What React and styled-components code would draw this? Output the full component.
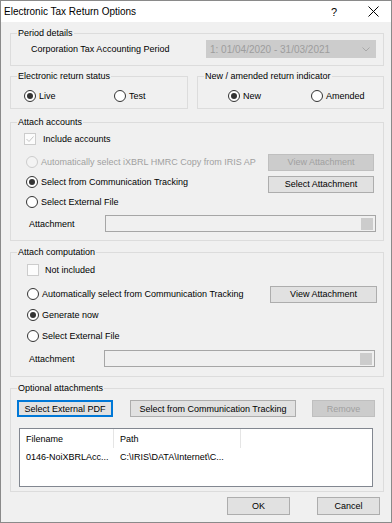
import React from 'react'
import styled, { createGlobalStyle } from 'styled-components'

const GlobalStyle = createGlobalStyle`
  body {
    margin: 0;
    background: #ffffff;
    font-family: "Liberation Sans", Arial, sans-serif;
  }
`

function Radio({ checked, disabled, gap = 3, children }) {
  return (
    <RadioLabel $disabled={disabled} $gap={gap}>
      <RadioCircle $checked={checked} $disabled={disabled} />
      <span>{children}</span>
    </RadioLabel>
  )
}

function Check({ checked, gap, children }) {
  return (
    <RadioLabel $gap={gap}>
      <CheckBox>
        {checked && (
          <svg width="10" height="10" viewBox="0 0 10 10">
            <polyline points="1.5,5 4,7.5 8.5,2.5" fill="none" stroke="#c4c4c4" strokeWidth="1" />
          </svg>
        )}
      </CheckBox>
      <span>{children}</span>
    </RadioLabel>
  )
}

function AttachmentField() {
  return (
    <Field>
      <FieldButton />
    </Field>
  )
}

function App() {
  return (
    <>
      <GlobalStyle />
      <Window>
        <TitleBar>
          <Title>Electronic Tax Return Options</Title>
          <HelpButton>?</HelpButton>
          <CloseButton>
            <svg width="11" height="11" viewBox="0 0 11 11">
              <path d="M0.5 0.5 L10.5 10.5 M10.5 0.5 L0.5 10.5" stroke="#000" strokeWidth="1" />
            </svg>
          </CloseButton>
        </TitleBar>

        <Body>
          <Group $h={38}>
            <Legend>Period details</Legend>
            <PeriodRow>
              <span>Corporation Tax Accounting Period</span>
              <Combo>
                <span>1: 01/04/2020 - 31/03/2021</span>
                <svg width="8" height="5" viewBox="0 0 8 5">
                  <polyline points="0.5,0.5 4,4 7.5,0.5" fill="none" stroke="#a8a8a8" strokeWidth="1" />
                </svg>
              </Combo>
            </PeriodRow>
          </Group>

          <StatusRow>
            <Group $h={38} $w={178}>
              <Legend>Electronic return status</Legend>
              <RadioLine $pl={13} $cols="90px auto">
                <Radio checked>Live</Radio>
                <Radio>Test</Radio>
              </RadioLine>
            </Group>
            <Group $h={38} $grow>
              <Legend>New / amended return indicator</Legend>
              <RadioLine $pl={30} $cols="83px auto">
                <Radio checked>New</Radio>
                <Radio>Amended</Radio>
              </RadioLine>
            </Group>
          </StatusRow>

          <Group $h={124} $mt={8}>
            <Legend>Attach accounts</Legend>
            <GroupBody $pl={13}>
              <OptionRow $mt={1}>
                <Check checked gap={7}>Include accounts</Check>
              </OptionRow>
              <OptionRow $mt={3} $indent={2}>
                <Radio disabled>Automatically select iXBRL HMRC Copy from IRIS AP</Radio>
                <Button disabled $w={106} $mr={2}>View Attachment</Button>
              </OptionRow>
              <OptionRow $indent={2}>
                <Radio checked>Select from Communication Tracking</Radio>
                <Button $w={106} $mr={2} $mt={4}>Select Attachment</Button>
              </OptionRow>
              <OptionRow $indent={2}>
                <Radio>Select External File</Radio>
              </OptionRow>
              <AttachRow $mt={3} $indent={5}>
                <span>Attachment</span>
                <AttachmentField />
              </AttachRow>
            </GroupBody>
          </Group>

          <Group $h={130} $mt={6}>
            <Legend>Attach computation</Legend>
            <GroupBody $pl={16}>
              <OptionRow $mt={2}>
                <Check gap={6}>Not included</Check>
              </OptionRow>
              <OptionRow $mt={4}>
                <Radio gap={3}>Automatically select from Communication Tracking</Radio>
                <Button $w={107} $mr={-1}>View Attachment</Button>
              </OptionRow>
              <OptionRow $mt={1}>
                <Radio checked>Generate now</Radio>
              </OptionRow>
              <OptionRow $mt={1}>
                <Radio>Select External File</Radio>
              </OptionRow>
              <AttachRow $mt={4} $indent={2} $mr={1}>
                <span>Attachment</span>
                <AttachmentField />
              </AttachRow>
            </GroupBody>
          </Group>

          <Group $h={109} $mt={6}>
            <Legend>Optional attachments</Legend>
            <GroupBody $pl={6}>
              <ButtonRow>
                <Button $w={96} $focus>Select External PDF</Button>
                <Button $w={166}>Select from Communication Tracking</Button>
                <Button $w={63} disabled>Remove</Button>
              </ButtonRow>
              <ListBox>
                <ListGrid>
                  <HeaderCell>Filename</HeaderCell>
                  <HeaderCell>Path</HeaderCell>
                  <HeaderCell $last />
                  <Cell>0146-NoiXBRLAcc...</Cell>
                  <Cell>C:\IRIS\DATA\Internet\C...</Cell>
                  <Cell />
                </ListGrid>
              </ListBox>
            </GroupBody>
          </Group>

          <Footer>
            <Button $w={63} $h={18}>OK</Button>
            <Button $w={63} $h={18}>Cancel</Button>
          </Footer>
        </Body>
      </Window>
    </>
  )
}

export default App

const Window = styled.div`
  width: 392px;
  height: 523px;
  box-sizing: border-box;
  border: 1px solid #8a8a8a;
  background: #f0f0f0;
  display: flex;
  flex-direction: column;
  font-size: 9px;
  color: #000;
`

const TitleBar = styled.div`
  height: 21px;
  background: #ffffff;
  display: flex;
  align-items: center;
  padding-left: 3px;
`

const Title = styled.div`
  font-size: 10px;
`

const HelpButton = styled.div`
  margin-left: auto;
  font-size: 11px;
`

const CloseButton = styled.div`
  display: flex;
  margin-left: 31px;
  margin-right: 12px;
`

const Body = styled.div`
  flex: 1;
  display: flex;
  flex-direction: column;
  padding: 6px 7px 0 9px;
`

const Group = styled.fieldset`
  margin: ${p => p.$mt || 0}px 0 0;
  padding: 0;
  min-width: 0;
  box-sizing: border-box;
  height: ${p => p.$h}px;
  width: ${p => (p.$w ? `${p.$w}px` : 'auto')};
  flex: ${p => (p.$grow ? '1' : 'none')};
  border: 1px solid #dcdcdc;
`

const Legend = styled.legend`
  margin-left: 6px;
  padding: 0 1px;
  font-size: 9px;
  line-height: 11px;
`

const PeriodRow = styled.div`
  display: flex;
  align-items: center;
  justify-content: space-between;
  height: 18px;
  padding: 1px 7px 0 20px;
`

const Combo = styled.div`
  width: 170px;
  height: 18px;
  box-sizing: border-box;
  background: #cccccc;
  border: 1px solid #cccccc;
  color: #9d9d9d;
  font-size: 10px;
  display: flex;
  align-items: center;
  justify-content: space-between;
  padding: 0 5px 0 3px;
`

const StatusRow = styled.div`
  display: flex;
  gap: 9px;
  margin-top: 5px;
`

const RadioLine = styled.div`
  display: grid;
  grid-template-columns: ${p => p.$cols};
  align-items: center;
  height: 14px;
  padding: 7px 0 0 ${p => p.$pl}px;
`

const RadioLabel = styled.label`
  display: flex;
  align-items: center;
  gap: ${p => p.$gap}px;
  height: 14px;
  white-space: nowrap;
  color: ${p => (p.$disabled ? '#a0a0a0' : '#000')};
`

const RadioCircle = styled.span`
  width: 12px;
  height: 12px;
  box-sizing: border-box;
  border-radius: 50%;
  border: 1px solid ${p => (p.$disabled ? '#cccccc' : '#333333')};
  background: ${p => (p.$disabled ? '#f3f3f3' : '#ffffff')};
  display: flex;
  align-items: center;
  justify-content: center;
  flex: none;

  &::after {
    content: '';
    display: ${p => (p.$checked ? 'block' : 'none')};
    width: 6px;
    height: 6px;
    border-radius: 50%;
    background: #333333;
  }
`

const CheckBox = styled.span`
  width: 12px;
  height: 12px;
  box-sizing: border-box;
  border: 1px solid #cccccc;
  background: #fcfcfc;
  display: flex;
  align-items: center;
  justify-content: center;
  flex: none;
`

const GroupBody = styled.div`
  display: flex;
  flex-direction: column;
  padding: 0 7px 0 ${p => p.$pl}px;
`

const OptionRow = styled.div`
  display: flex;
  align-items: center;
  justify-content: space-between;
  height: 20px;
  margin-top: ${p => p.$mt || 0}px;
  padding-left: ${p => p.$indent || 0}px;
`

const AttachRow = styled.div`
  display: flex;
  align-items: center;
  justify-content: space-between;
  height: 17px;
  margin-top: ${p => p.$mt || 0}px;
  margin-right: ${p => p.$mr || 0}px;
  padding-left: ${p => p.$indent || 0}px;
`

const Field = styled.div`
  width: 271px;
  height: 17px;
  box-sizing: border-box;
  border: 1px solid #a6a6a6;
  background: #f0f0f0;
  display: flex;
  align-items: center;
  justify-content: flex-end;
  padding-right: 2px;
`

const FieldButton = styled.div`
  width: 12px;
  height: 12px;
  background: #cccccc;
`

const Button = styled.button`
  width: ${p => p.$w}px;
  height: ${p => p.$h || 17}px;
  box-sizing: border-box;
  margin: ${p => p.$mt || 0}px ${p => p.$mr || 0}px 0 0;
  padding: 0;
  font-family: "Liberation Sans", Arial, sans-serif;
  font-size: 9px;
  white-space: nowrap;
  background: ${p => (p.disabled ? '#cccccc' : '#e1e1e1')};
  color: ${p => (p.disabled ? '#a0a0a0' : '#000')};
  border: 1px solid ${p => (p.$focus ? '#0078d7' : p.disabled ? '#bfbfbf' : '#adadad')};
  box-shadow: ${p => (p.$focus ? 'inset 0 0 0 1px #0078d7' : 'none')};
`

const ButtonRow = styled.div`
  display: flex;
  gap: 17px;
  margin-top: 6px;

  & > :last-child {
    margin-left: -1px;
  }
`

const ListBox = styled.div`
  width: 354px;
  height: 59px;
  box-sizing: border-box;
  margin: 11px 0 0 2px;
  border: 1px solid #828790;
  background: #ffffff;
`

const ListGrid = styled.div`
  display: grid;
  grid-template-columns: 94px 127px 1fr;
  grid-template-rows: 19px 18px;
`

const HeaderCell = styled.div`
  display: flex;
  align-items: center;
  padding-left: 6px;
  border-right: ${p => (p.$last ? 'none' : '1px solid #e5e5e5')};
`

const Cell = styled.div`
  display: flex;
  align-items: center;
  padding-left: 6px;
  white-space: nowrap;
`

const Footer = styled.div`
  display: flex;
  justify-content: flex-end;
  gap: 27px;
  margin-top: 5px;
  padding-right: 4px;
`
